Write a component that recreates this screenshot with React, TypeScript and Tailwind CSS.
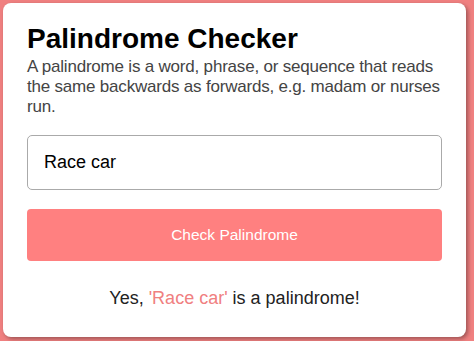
import React from "react";

export default function App() {
  return (
    <div className="w-[474px] h-[341px] bg-[#f08080] pl-[3px] pt-[3px]" style={{ fontFamily: '"Liberation Sans", Arial, sans-serif' }}>
      <div className="w-[463px] h-[334px] bg-white rounded-[8px] shadow-[2px_2px_4px_rgba(0,0,0,0.35)] px-6 pt-[19px] flex flex-col">
        <h1 className="text-[28px] font-bold leading-[34px] text-black">Palindrome Checker</h1>
        <p className="text-[17px] tracking-[-0.2px] leading-[20px] text-[#444] mt-[1px]">
          A palindrome is a word, phrase, or sequence that reads the same backwards as forwards, e.g. madam or nurses run.
        </p>
        <div className="mt-[18px] h-[55px] border border-[#aaa] rounded-[5px] flex items-center px-4 text-[18px] text-black">
          Race car
        </div>
        <button className="mt-[19px] h-[52px] bg-[#ff8080] rounded-[4px] text-white text-[15.5px] flex items-center justify-center">
          Check Palindrome
        </button>
        <div className="mt-[24px] text-center text-[18px] text-[#222]">
          Yes, <span className="text-[#f08080]">'Race car'</span> is a palindrome!
        </div>
      </div>
    </div>
  );
}
